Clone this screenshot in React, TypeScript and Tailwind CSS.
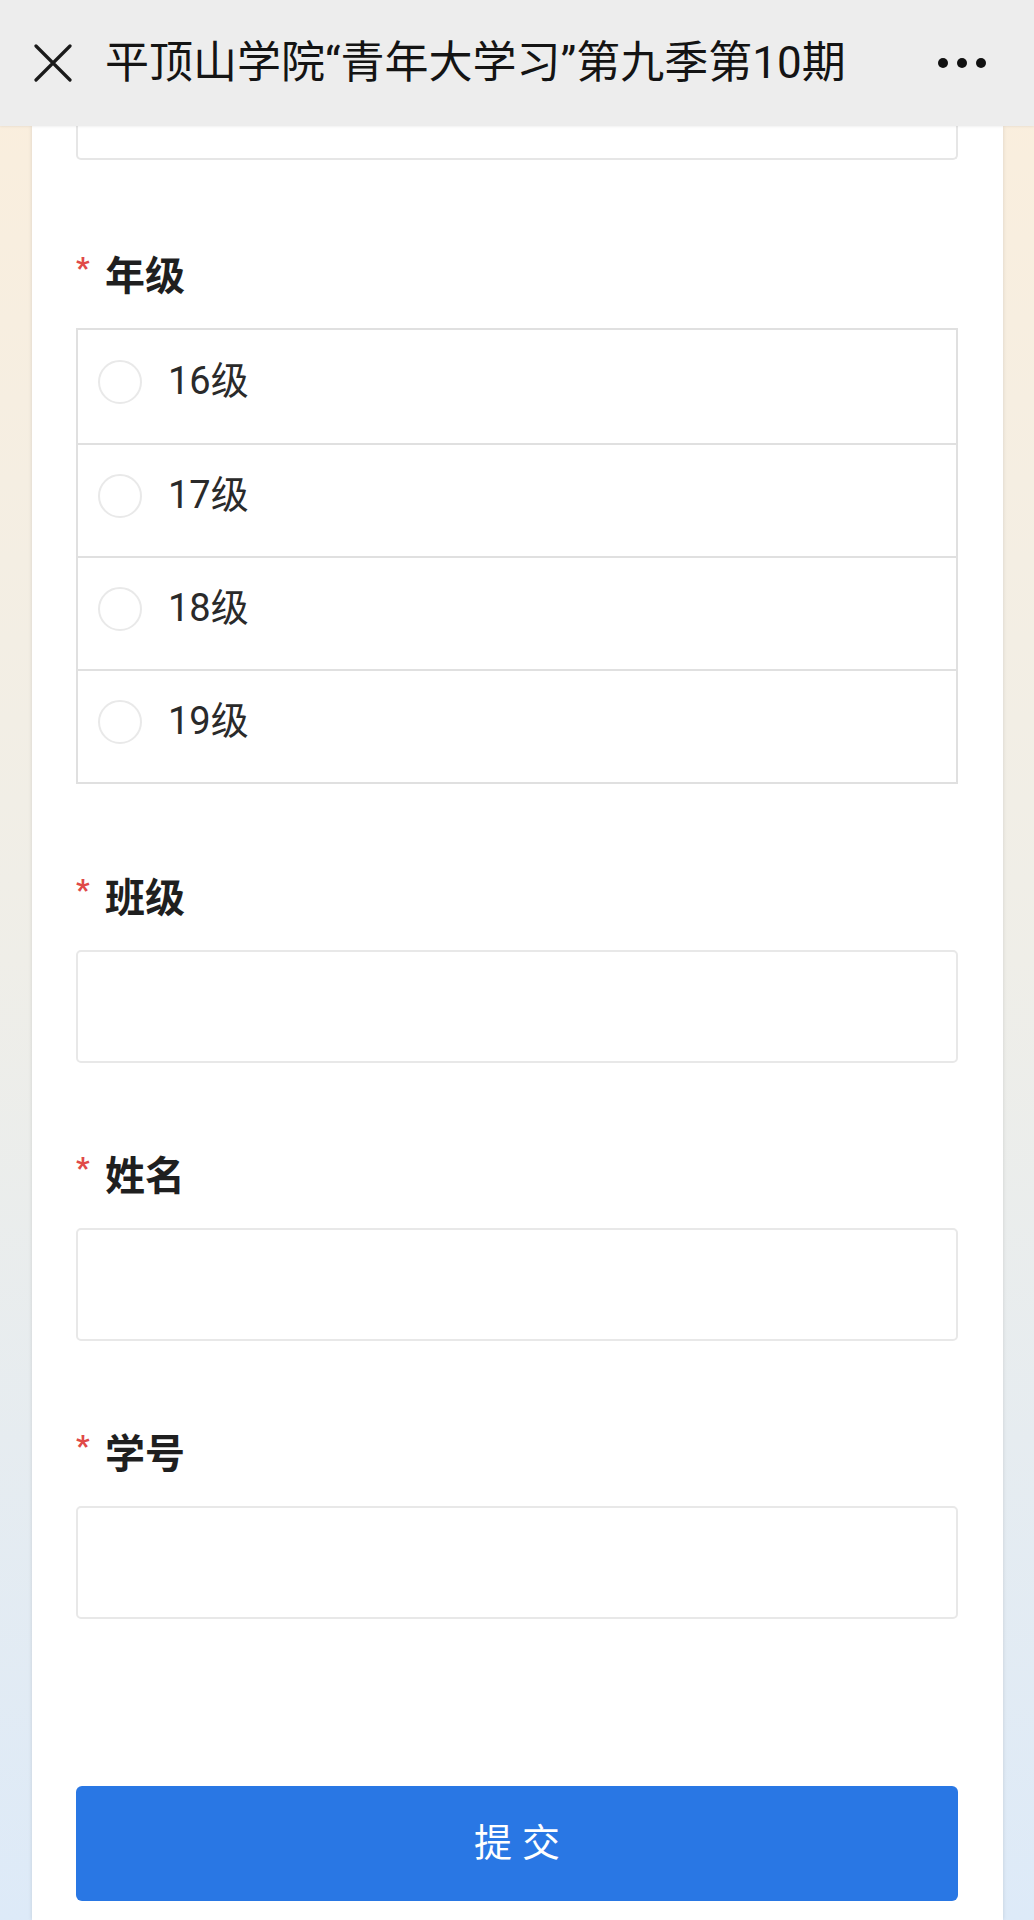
import React from 'react';

const FONT = "font-['Roboto','Noto_Sans_CJK_SC',sans-serif]";

const grades = ['16级', '17级', '18级', '19级'];

const Label = ({ text }: { text: string }) => (
  <div className="flex items-start h-[50px] mb-[26px]">
    <span className="w-[29px] pt-[3px] text-[30px] leading-[26px] font-bold text-[#e04a48]">*</span>
    <span className="text-[40px] leading-[50px] font-bold text-[#1f1f1f]">{text}</span>
  </div>
);

const TextBox = () => (
  <div className="h-[113px] rounded-[5px] border-2 border-[#e8e8e8] bg-white"></div>
);

export default function App() {
  return (
    <div className={`w-[1034px] h-[1920px] overflow-hidden flex flex-col bg-gradient-to-b from-[#fbeedc] via-[#efeee8] to-[#ddeaf8] ${FONT}`}>
      {/* title bar */}
      <div className="h-[126px] shrink-0 flex items-center bg-[#ededed] pl-[34px] pr-[48px] shadow-[0_1px_2px_rgba(0,0,0,0.06)] relative z-10">
        <svg width="38" height="38" viewBox="0 0 38 38" className="shrink-0">
          <path d="M2 2 L36 36 M36 2 L2 36" stroke="#1a1a1a" strokeWidth="3.2" strokeLinecap="round" />
        </svg>
        <h1 className="ml-[33px] text-[44px] leading-none text-[#141414] whitespace-nowrap">
          平顶山学院“青年大学习”第九季第10期
        </h1>
        <div className="ml-auto flex items-center gap-[9px]">
          <span className="w-[10px] h-[10px] rounded-full bg-[#111]"></span>
          <span className="w-[10px] h-[10px] rounded-full bg-[#111]"></span>
          <span className="w-[10px] h-[10px] rounded-full bg-[#111]"></span>
        </div>
      </div>

      {/* form card */}
      <div className="flex-1 ml-[32px] mr-[31px] bg-white pl-[44px] pr-[45px] shadow-[0_0_4px_rgba(0,0,0,0.12)]">
        {/* previous field, scrolled under the bar */}
        <div className="h-[34px] border-x-2 border-b-2 border-[#e6e6e6] rounded-b-[5px]"></div>

        <div className="mt-[92px]">
          <Label text="年级" />
          <div className="border-2 border-[#e0e0e0]">
            {grades.map((g, i) => (
              <div
                key={g}
                className={`h-[113px] flex items-center pl-[20px] pb-[10px] ${i > 0 ? 'border-t-2 border-[#e0e0e0]' : ''}`}
              >
                <span className="w-[44px] h-[44px] rounded-full border-2 border-[#e9e9e9]"></span>
                <span className="ml-[26px] text-[38px] text-[#2a2a2a]">{g}</span>
              </div>
            ))}
          </div>
        </div>

        <div className="mt-[90px]">
          <Label text="班级" />
          <TextBox />
        </div>

        <div className="mt-[89px]">
          <Label text="姓名" />
          <TextBox />
        </div>

        <div className="mt-[89px]">
          <Label text="学号" />
          <TextBox />
        </div>

        <button className="mt-[167px] w-full h-[115px] rounded-[6px] bg-[#2977e4] text-white text-[38px] tracking-[10px] pl-[10px]">
          提交
        </button>
      </div>
    </div>
  );
}
